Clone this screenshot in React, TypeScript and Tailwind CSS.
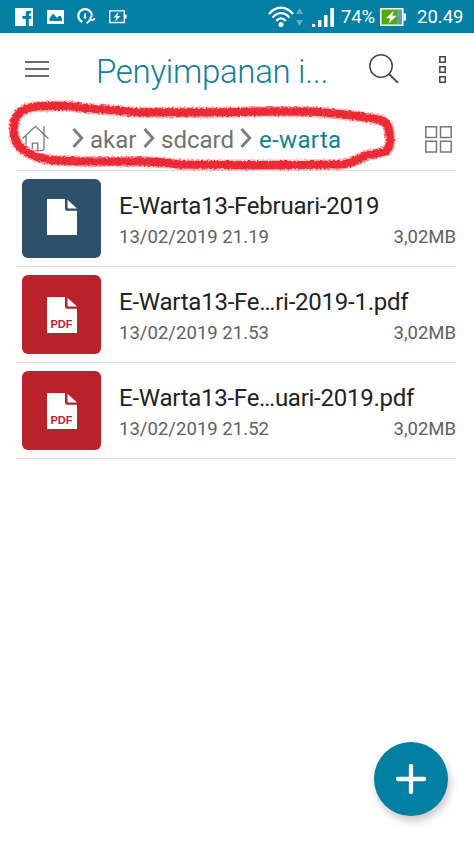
import React from 'react';

interface FileEntry {
  name: string;
  date: string;
  size: string;
  type: 'file' | 'pdf';
  nameClass: string;
}

const files: FileEntry[] = [
  { name: 'E-Warta13-Februari-2019', date: '13/02/2019 21.19', size: '3,02MB', type: 'file', nameClass: 'tracking-[-0.24px]' },
  { name: 'E-Warta13-Fe…ri-2019-1.pdf', date: '13/02/2019 21.53', size: '3,02MB', type: 'pdf', nameClass: 'tracking-[-0.24px]' },
  { name: 'E-Warta13-Fe…uari-2019.pdf', date: '13/02/2019 21.52', size: '3,02MB', type: 'pdf', nameClass: 'tracking-[-0.26px]' },
];

const StatusBar: React.FC = () => (
  <div className="flex h-[33px] items-center justify-between bg-[#027fa3] pl-[15px] pr-[11px] text-white">
    <div className="flex items-center">
      {/* Facebook */}
      <svg className="h-[18px] w-[18px]" viewBox="0 0 18 18">
        <path fill="#fff" d="M0 0h18v4h-2c-1.200 0-1.900.5-1.900 1.700v2.200h3.300l-.4 2.600h-2.900V18h-3.300v-7.500H7.300V7.900h3.500V5.200c0-1.600.8-2.600 2-3.100H18V18H0z" fillRule="evenodd" />
        <path fill="#027fa3" d="M16.200 3v2.600h-1.300c-.8 0-1.100.4-1.100 1.100v1.500h2.400l-.4 2.600h-2V18H11v-7.200H8V8.200h3V6.300C11 4.200 12.200 3 14.300 3z" />
        <path fill="#fff" d="M0 0h18v2.900H0zM16.300 2H18v16h-1.700zM13.800 10.900h3V18h-3z" />
      </svg>
      {/* Screenshot */}
      <svg className="ml-[14px] h-[14px] w-[17px]" viewBox="0 0 17 14">
        <path fill="#fff" fillRule="evenodd" d="M0 0h17v14H0zM2.500 11h12.300V7.800c-.8-2.300-2.500-2.800-3.800-1L9.800 8.100 7.700 5.200c-1-1.600-2.200-1.500-3 .1L2.500 8.400z" />
      </svg>
      {/* Power saver gauge */}
      <svg className="ml-[13px] h-[17px] w-[19px]" viewBox="0 0 19 17" fill="none" stroke="#fff">
        <path strokeWidth="2.200" d="M5.200 14A6.800 6.800 0 1 1 14.900 7" />
        <path fill="#fff" strokeWidth=".8" d="M8 5.200 7.200 9.800c.2 1 1.400 1 1.600 0z" />
        <path strokeWidth="1.900" d="m9.700 15.300 3.800-3.800" />
        <path strokeWidth="1.800" d="M15.700 7.800c-2.300.4-3 2.300-1.800 3.600 1.300 1.200 3.400.8 3.800-1.400" />
      </svg>
      {/* Charging notification */}
      <svg className="ml-[13px] h-[14px] w-[18px]" viewBox="0 0 18 14">
        <path fill="none" stroke="#fff" strokeWidth="1.400" d="M.7.9h14.600v11.600H.7z" />
        <path fill="#fff" d="M16 4.500h1.600v4H16zM9.500 2 4.400 7.400h3L6 11.600l5.500-5.700H8.400z" />
      </svg>
    </div>
    <div className="flex items-center">
      <svg className="h-[22px] w-[26px]" viewBox="0 0 26 22" fill="none" stroke="#fff" strokeWidth="2.300">
        <path d="M1 8C7.700-.3 18.300-.3 25 8" />
        <path d="M4.600 11.600c4.800-6 12-6 16.800 0" />
        <path d="M8.300 15c2.800-3.400 6.600-3.400 9.400 0" />
        <circle cx="13" cy="18.500" r="2.500" fill="#fff" stroke="none" />
      </svg>
      <svg className="ml-[2px] h-[18px] w-[7px]" viewBox="0 0 7 18" fill="#6aabc0">
        <path d="M0 6 3.500 0 7 6zM0 12h7l-3.500 6z" />
      </svg>
      <svg className="ml-[9px] mt-[2px] h-[19px] w-[22px]" viewBox="0 0 22 19" fill="#fff">
        <path d="M0 16h3.200v3H0zM6 12h3.400v7H6zM12 7h3.500v12H12zM18.300 0H22v19h-3.700z" />
      </svg>
      <span className="ml-[7px] mt-[2px] w-[35px] whitespace-nowrap text-[18.500px] leading-none tracking-[-0.2px]">74%</span>
      <svg className="ml-[4px] h-[18px] w-[26px]" viewBox="0 0 26 18">
        <path fill="#4ead0c" d="M1 1h16v16H1z" />
        <path fill="#5b9fb9" d="M17 1h6v16h-6z" />
        <path fill="none" stroke="#fff" strokeWidth="1.500" d="M.8.8h22v16.400H.8z" />
        <path fill="#fff" d="M23.500 5.500H26v7h-2.500zM14 2.500 6 10.300h4.500L8.500 15.500l8.300-7.700h-4.600z" />
      </svg>
      <span className="ml-[11px] mt-[2px] w-[46px] whitespace-nowrap text-[18.500px] leading-none">20.49</span>
    </div>
  </div>
);

const Header: React.FC = () => (
  <header className="flex h-[72px] items-center pl-[25px] pr-[28px]">
    <button className="flex w-6 flex-col gap-[5px]" aria-label="Menu">
      <span className="h-[2px] w-full bg-[#6b6b6b]" />
      <span className="h-[2px] w-full bg-[#6b6b6b]" />
      <span className="h-[2px] w-full bg-[#6b6b6b]" />
    </button>
    <h1 className="ml-[46px] mt-[4px] w-[274px] whitespace-nowrap pl-px text-[33px] font-light leading-none tracking-[-0.3px] text-[#147f9a]">Penyimpanan i...</h1>
    <svg className="h-[30px] w-[30px]" viewBox="0 0 30 30" fill="none" stroke="#444" strokeWidth="1.500">
      <circle cx="12" cy="12" r="11.200" />
      <path strokeWidth="1.800" d="m20 20 9 8.800" />
    </svg>
    <svg className="ml-auto h-[27px] w-[7px]" viewBox="0 0 7 27" fill="none" stroke="#444" strokeWidth="1.500">
      <path d="M.8.800h5.400v5.400H.8zM.8 10.800h5.400v5.400H.8zM.8 20.800h5.400v5.400H.8z" />
    </svg>
  </header>
);

const Chevron: React.FC = () => (
  <svg className="mb-[2px] h-5 w-3 shrink-0" viewBox="0 0 12 20" fill="none" stroke="#7d7d7d" strokeWidth="2.900">
    <path d="m1.500 1 8.200 9-8.200 9" />
  </svg>
);

const Breadcrumb: React.FC = () => (
  <nav className="relative flex h-[65px] items-center pl-[22px] pr-[22px] pt-[3px] text-[24px] leading-none text-[#727272]">
    <svg className="mb-px h-[27px] w-[27px]" viewBox="0 0 27 27" fill="none" stroke="#777" strokeWidth="1.300">
      <path d="M.6 13.500 13.500 1.300l12.900 12.200M4 11v14.200h4.500M22 9.500V1v22.500c0 1.300-.8 2.100-2.100 2.100H10.400v-7.400h5.400v7.400" />
    </svg>
    <div className="ml-[23px]"><Chevron /></div>
    <span className="ml-[6px] mt-[2px] w-[46px]">akar</span>
    <div className="ml-[7px]"><Chevron /></div>
    <span className="ml-[6px] mt-[2px] w-[72px]">sdcard</span>
    <div className="ml-[7px]"><Chevron /></div>
    <span className="ml-[7px] mt-[2px] tracking-[0.350px] text-[#147f92]">e-warta</span>
    <svg className="ml-auto h-[27px] w-[27px]" viewBox="0 0 27 27" fill="none" stroke="#777" strokeWidth="1.500">
      <path d="M.8.800h10.700v10.700H.8zM15.500.800h10.700v10.700H15.500zM.8 15.200h10.700v10.700H.8zM15.500 15.200h10.700v10.700H15.500z" />
    </svg>

    {/* Marker drawn around the path */}
    <svg className="pointer-events-none absolute left-0 top-[-9px] h-[84px] w-[474px]" viewBox="0 96 474 84" fill="none" strokeLinejoin="round" strokeLinecap="round">
      <defs>
        <filter id="rough" x="-5%" y="-20%" width="110%" height="140%" colorInterpolationFilters="sRGB">
          <feTurbulence type="fractalNoise" baseFrequency="0.5" numOctaves="2" seed="4" />
          <feDisplacementMap in="SourceGraphic" scale="4" xChannelSelector="R" yChannelSelector="G" />
        </filter>
        <path id="loop" d="M17 116C21 110 27 108 33 107C46 105.500 58 106 67 106C75 106.500 84 108 95 109C110 109.500 122 111 133 112C160 112.500 200 112.500 237 112C265 111.500 300 110.500 325 112.500C345 114.500 366 117 378 119.500C388 122 388 126 389 131C390.500 139 391 146 387 150C382 154 372 153 365 156C356 160 352 164 338 164.500C300 165 215 165 180 164.500C160 162 150 161 133 161.500C115 161.500 80 162 50 160C38 158 29 155 21 148C14 141 13.500 132 13.800 128C13.500 122 15 119 17 116Z" />
      </defs>
      <g filter="url(#rough)">
        <use href="#loop" stroke="#fbb3b4" strokeWidth="11" />
        <use href="#loop" stroke="#f02a34" strokeWidth="8.200" />
        <use href="#loop" stroke="#d22a42" strokeWidth="3.500" strokeDasharray="1 5 2 4 1 7" strokeLinecap="butt" />
      </g>
    </svg>
  </nav>
);

const FileIcon: React.FC<{ type: FileEntry['type'] }> = ({ type }) => (
  <div className={`flex h-[79px] w-[79px] shrink-0 items-center justify-center rounded-[6px] ${type === 'pdf' ? 'bg-[#b9222a]' : 'bg-[#2e506b]'}`}>
    <div className={`relative h-9 w-[30px] ${type === 'pdf' ? 'mt-[1px]' : 'mb-[3px]'}`}>
      <svg className="h-9 w-[30px]" viewBox="0 0 30 36" fill="#fff">
        <path d="M0 0h18v9.500c0 1.500.8 2.300 2.300 2.300H30V36H0zM20.500.800 30 9.500h-8c-1 0-1.500-.5-1.500-1.500z" />
      </svg>
      {type === 'pdf' && (
        <span className="absolute inset-x-0 bottom-[3px] text-center font-['Liberation_Sans'] text-[11px] font-bold leading-none text-[#b9222a]">PDF</span>
      )}
    </div>
  </div>
);

const FileRow: React.FC<{ file: FileEntry }> = ({ file }) => (
  <li className="flex h-24 border-b border-[#dedede] pl-[6px] pt-[8px]">
    <FileIcon type={file.type} />
    <div className="ml-[18px] flex-1 pt-[14px]">
      <p className={`whitespace-nowrap text-[24px] leading-[26px] text-[#222] ${file.nameClass}`}>{file.name}</p>
      <div className="mt-[8px] flex justify-between text-[18.500px] leading-5 text-[#606060]">
        <span className="tracking-[0.030px]">{file.date}</span>
        <span>{file.size}</span>
      </div>
    </div>
  </li>
);

export default function App() {
  return (
    <div className="relative h-[842px] w-[474px] overflow-hidden bg-white font-[Roboto,sans-serif]">
      <StatusBar />
      <Header />
      <Breadcrumb />
      <ul className="ml-4 mr-[18px] border-t border-[#dedede]">
        {files.map((file) => (
          <FileRow key={file.name} file={file} />
        ))}
      </ul>

      <button className="absolute bottom-[26px] right-[26px] flex h-[74px] w-[74px] items-center justify-center rounded-full bg-[#027fa3] shadow-[2px_5px_9px_rgba(0,0,0,0.22)]" aria-label="Add">
        <svg className="h-8 w-8" viewBox="0 0 32 32" stroke="#fff" strokeWidth="4.300" strokeLinecap="round">
          <path d="M16 3v26M3 16h26" />
        </svg>
      </button>
    </div>
  );
}
